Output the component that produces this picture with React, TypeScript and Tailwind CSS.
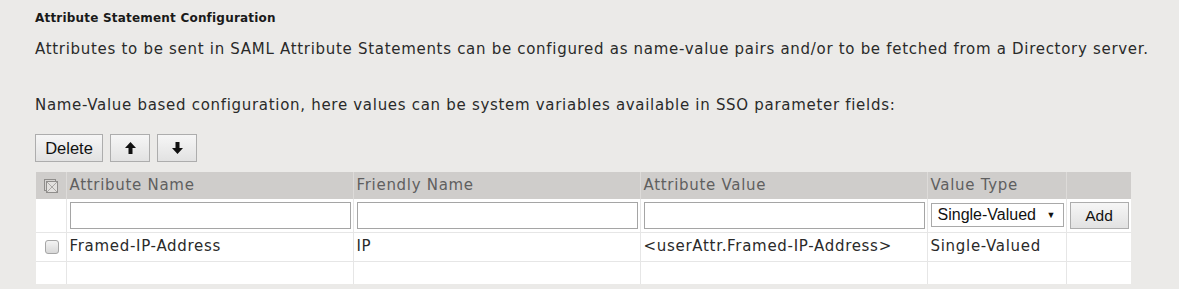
import React from "react";

const HeaderCheck = () => (
  <svg width="14" height="14" viewBox="0 0 14 14" className="block">
    <rect x="0.5" y="0.5" width="11" height="11" fill="#d6d4d2" stroke="#8f8d8b" />
    <rect x="2.5" y="2.5" width="11" height="11" fill="#e2e0de" stroke="#8f8d8b" />
    <path d="M3 3 L13 13 M13 3 L3 13" stroke="#a9a7a5" strokeWidth="1" />
  </svg>
);

const Check = () => (
  <span className="block w-[14px] h-[14px] rounded-[3px] border border-[#a6a6a6] bg-gradient-to-b from-[#f4f4f4] to-[#d8d8d8]" />
);

export default function App() {
  const verdana = { fontFamily: '"DejaVu Sans", Verdana, sans-serif' };
  const arial = { fontFamily: '"Liberation Sans", Arial, sans-serif' };
  return (
    <div className="w-[1179px] h-[289px] bg-[#ebeae8] overflow-hidden pl-[35px] pt-[10px] text-[#2a2a2a] tracking-[0.7px]" style={verdana}>
      <div className="text-[12px] font-bold leading-[16px] text-[#1a1a1a] tracking-[0.2px]">Attribute Statement Configuration</div>
      <div className="text-[15px] leading-[20px] mt-[13px]">
        Attributes to be sent in SAML Attribute Statements can be configured as name-value pairs and/or to be fetched from a Directory server.
      </div>
      <div className="text-[15px] leading-[20px] mt-[36px]">
        Name-Value based configuration, here values can be system variables available in SSO parameter fields:
      </div>
      <div className="flex gap-[7px] mt-[19px] tracking-normal" style={arial}>
        <button className="h-[28px] w-[68px] border border-[#adadad] bg-gradient-to-b from-[#f6f6f6] to-[#e2e2e2] text-[16.5px] text-[#111]">Delete</button>
        <button className="h-[28px] w-[40px] border border-[#adadad] bg-gradient-to-b from-[#f6f6f6] to-[#e2e2e2] flex items-center justify-center">
          <svg width="11" height="12" viewBox="0 0 11 12"><path d="M5.5 0 L11 6 L7.5 6 L7.5 12 L3.5 12 L3.5 6 L0 6 Z" fill="#111" /></svg>
        </button>
        <button className="h-[28px] w-[40px] border border-[#adadad] bg-gradient-to-b from-[#f6f6f6] to-[#e2e2e2] flex items-center justify-center">
          <svg width="11" height="12" viewBox="0 0 11 12"><path d="M5.5 12 L11 6 L7.5 6 L7.5 0 L3.5 0 L3.5 6 L0 6 Z" fill="#111" /></svg>
        </button>
      </div>
      <table className="mt-[10px] ml-[1px] border-collapse table-fixed w-[1095px] text-[15px]">
        <colgroup>
          <col className="w-[30px]" />
          <col className="w-[287px]" />
          <col className="w-[287px]" />
          <col className="w-[287px]" />
          <col className="w-[139px]" />
          <col className="w-[65px]" />
        </colgroup>
        <thead>
          <tr className="h-[27px] bg-[#cfcdcb] text-[#5f5f5f]">
            <th className="border-r border-[#dddbd9] p-0"><div className="flex justify-center"><HeaderCheck /></div></th>
            <th className="border-r border-[#dddbd9] font-normal text-left pl-[3px]">Attribute Name</th>
            <th className="border-r border-[#dddbd9] font-normal text-left pl-[3px]">Friendly Name</th>
            <th className="border-r border-[#dddbd9] font-normal text-left pl-[3px]">Attribute Value</th>
            <th className="border-r border-[#dddbd9] font-normal text-left pl-[3px]">Value Type</th>
            <th className="font-normal"></th>
          </tr>
        </thead>
        <tbody className="bg-white">
          <tr className="h-[33px] border-b border-[#e6e6e6]">
            <td className="border-r border-[#e6e6e6]"></td>
            <td className="border-r border-[#e6e6e6] px-[3px]"><input className="block w-[281px] h-[27px] border border-[#a5a5a5] bg-white" /></td>
            <td className="border-r border-[#e6e6e6] px-[3px]"><input className="block w-[281px] h-[27px] border border-[#a5a5a5] bg-white" /></td>
            <td className="border-r border-[#e6e6e6] px-[3px]"><input className="block w-[281px] h-[27px] border border-[#a5a5a5] bg-white" /></td>
            <td className="border-r border-[#e6e6e6] px-[3px]">
              <div className="w-[133px] h-[24px] border border-[#a9a9a9] bg-white flex items-center justify-between pl-[6px] pr-[7px] text-[16px] text-[#111] tracking-normal" style={arial}>
                <span>Single-Valued</span>
                <span className="text-[9px]">▼</span>
              </div>
            </td>
            <td className="px-[3px]">
              <button className="block w-[59px] h-[27px] border border-[#adadad] bg-gradient-to-b from-[#f6f6f6] to-[#e2e2e2] text-[15.5px] text-[#111] tracking-normal" style={arial}>Add</button>
            </td>
          </tr>
          <tr className="h-[29px] border-b border-[#e6e6e6]">
            <td className="border-r border-[#e6e6e6] p-0"><div className="flex justify-center pl-[2px]"><Check /></div></td>
            <td className="border-r border-[#e6e6e6] pl-[3px]">Framed-IP-Address</td>
            <td className="border-r border-[#e6e6e6] pl-[3px]">IP</td>
            <td className="border-r border-[#e6e6e6] pl-[3px]">&lt;userAttr.Framed-IP-Address&gt;</td>
            <td className="border-r border-[#e6e6e6] pl-[3px]">Single-Valued</td>
            <td></td>
          </tr>
          <tr className="h-[23px]">
            <td className="border-r border-[#e6e6e6]"></td>
            <td className="border-r border-[#e6e6e6]"></td>
            <td className="border-r border-[#e6e6e6]"></td>
            <td className="border-r border-[#e6e6e6]"></td>
            <td className="border-r border-[#e6e6e6]"></td>
            <td></td>
          </tr>
        </tbody>
      </table>
    </div>
  );
}
